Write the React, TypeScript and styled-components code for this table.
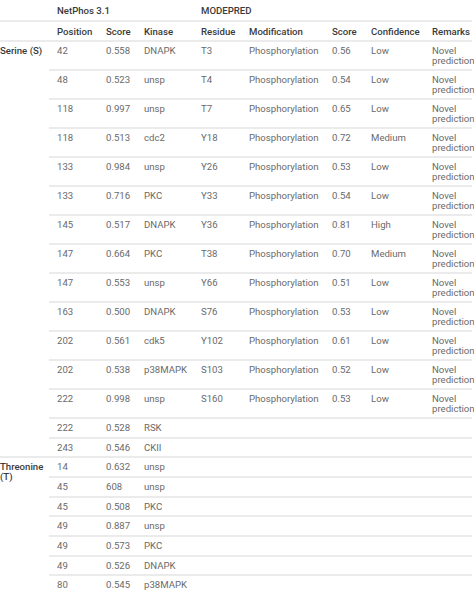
import React from 'react'
import styled, { createGlobalStyle } from 'styled-components'

const GlobalStyle = createGlobalStyle`
  html, body {
    margin: 0;
    padding: 0;
    background: #ffffff;
    overflow: hidden;
  }
  body {
    font-family: Roboto, "Noto Sans", "Liberation Sans", sans-serif;
  }
`

interface Row {
  pos: string
  score: string
  kinase: string
  residue?: string
  score2?: string
  confidence?: string
}

const serine: Row[] = [
  { pos: '42', score: '0.558', kinase: 'DNAPK', residue: 'T3', score2: '0.56', confidence: 'Low' },
  { pos: '48', score: '0.523', kinase: 'unsp', residue: 'T4', score2: '0.54', confidence: 'Low' },
  { pos: '118', score: '0.997', kinase: 'unsp', residue: 'T7', score2: '0.65', confidence: 'Low' },
  { pos: '118', score: '0.513', kinase: 'cdc2', residue: 'Y18', score2: '0.72', confidence: 'Medium' },
  { pos: '133', score: '0.984', kinase: 'unsp', residue: 'Y26', score2: '0.53', confidence: 'Low' },
  { pos: '133', score: '0.716', kinase: 'PKC', residue: 'Y33', score2: '0.54', confidence: 'Low' },
  { pos: '145', score: '0.517', kinase: 'DNAPK', residue: 'Y36', score2: '0.81', confidence: 'High' },
  { pos: '147', score: '0.664', kinase: 'PKC', residue: 'T38', score2: '0.70', confidence: 'Medium' },
  { pos: '147', score: '0.553', kinase: 'unsp', residue: 'Y66', score2: '0.51', confidence: 'Low' },
  { pos: '163', score: '0.500', kinase: 'DNAPK', residue: 'S76', score2: '0.53', confidence: 'Low' },
  { pos: '202', score: '0.561', kinase: 'cdk5', residue: 'Y102', score2: '0.61', confidence: 'Low' },
  { pos: '202', score: '0.538', kinase: 'p38MAPK', residue: 'S103', score2: '0.52', confidence: 'Low' },
  { pos: '222', score: '0.998', kinase: 'unsp', residue: 'S160', score2: '0.53', confidence: 'Low' },
  { pos: '222', score: '0.528', kinase: 'RSK' },
  { pos: '243', score: '0.546', kinase: 'CKII' },
]

const threonine: Row[] = [
  { pos: '14', score: '0.632', kinase: 'unsp' },
  { pos: '45', score: '608', kinase: 'unsp' },
  { pos: '45', score: '0.508', kinase: 'PKC' },
  { pos: '49', score: '0.887', kinase: 'unsp' },
  { pos: '49', score: '0.573', kinase: 'PKC' },
  { pos: '49', score: '0.526', kinase: 'DNAPK' },
  { pos: '80', score: '0.545', kinase: 'p38MAPK' },
]

const groups = [
  { label: 'Serine (S)', rows: serine },
  { label: 'Threonine (T)', rows: threonine },
]

const widths = [49, 49, 38, 57, 48, 83, 39, 61, 48]

function App() {
  return (
    <>
      <GlobalStyle />
      <Table>
        <colgroup>
          {widths.map((w, i) => (
            <col key={i} style={{ width: w }} />
          ))}
        </colgroup>
        <thead>
          <GroupRow>
            <HeadCell $first />
            <HeadCell colSpan={3}>NetPhos 3.1</HeadCell>
            <HeadCell colSpan={5}>MODEPRED</HeadCell>
          </GroupRow>
          <ColumnRow>
            <HeadCell $first />
            <HeadCell>Position</HeadCell>
            <HeadCell>Score</HeadCell>
            <HeadCell>Kinase</HeadCell>
            <HeadCell>Residue</HeadCell>
            <HeadCell>Modification</HeadCell>
            <HeadCell>Score</HeadCell>
            <HeadCell>Confidence</HeadCell>
            <HeadCell>Remarks</HeadCell>
          </ColumnRow>
        </thead>
        <tbody>
          {groups.map((g) =>
            g.rows.map((r, i) => {
              const tall = !!r.residue
              return (
                <BodyRow key={g.label + i} $tall={tall}>
                  {i === 0 && (
                    <GroupLabel rowSpan={g.rows.length}>{g.label}</GroupLabel>
                  )}
                  <Cell>{r.pos}</Cell>
                  <Cell>{r.score}</Cell>
                  <Cell>{r.kinase}</Cell>
                  <Cell>{r.residue}</Cell>
                  <Cell>{tall ? 'Phosphorylation' : ''}</Cell>
                  <Cell>{r.score2}</Cell>
                  <Cell>{r.confidence}</Cell>
                  <Remark>{tall ? 'Novel prediction' : ''}</Remark>
                </BodyRow>
              )
            })
          )}
        </tbody>
      </Table>
    </>
  )
}

const Table = styled.table`
  width: 472px;
  table-layout: fixed;
  border-collapse: collapse;
  font-size: 9.6px;
  color: #6a6a6a;
`

const GroupRow = styled.tr`
  height: 21px;
`

const ColumnRow = styled.tr`
  height: 20px;
`

const HeadCell = styled.th<{ $first?: boolean }>`
  padding: 0 0 0 ${(p) => (p.$first ? '0' : '8px')};
  text-align: left;
  vertical-align: middle;
  font-weight: 500;
  color: #3a3a3a;
  line-height: 11px;
  border-bottom: 2px solid #ebebeb;
  white-space: nowrap;
`

const BodyRow = styled.tr<{ $tall: boolean }>`
  height: ${(p) => (p.$tall ? '29px' : '19.67px')};
`

const Cell = styled.td`
  padding: 4px 0 0 8px;
  vertical-align: top;
  line-height: 10px;
  border-bottom: 2px solid #ebebeb;
  white-space: nowrap;
`

const Remark = styled(Cell)`
  white-space: normal;
  padding-right: 8px;
  overflow: visible;
`

const GroupLabel = styled.td`
  padding: 4px 0 0 0;
  vertical-align: top;
  line-height: 10px;
  font-weight: 500;
  color: #3a3a3a;
  border-bottom: 2px solid #ebebeb;
`

export default App
